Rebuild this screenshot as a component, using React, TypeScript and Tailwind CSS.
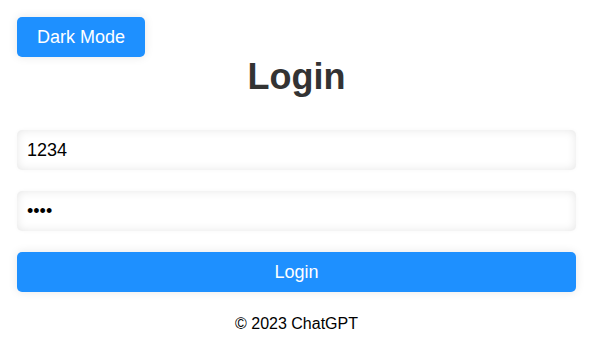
import { useState } from "react";

export default function App() {
    const [dark, setDark] = useState(false);
    const [user, setUser] = useState("1234");
    const [pass, setPass] = useState("1234");

    return (
        <div
            className={`min-h-screen pl-[17px] pr-[16px] pt-[17px] ${dark ? "bg-[#222] text-white" : "bg-white text-black"}`}
            style={{ fontFamily: '"Liberation Sans", Arial, sans-serif' }}
        >
            <div className="flex">
                <button
                    onClick={() => setDark(!dark)}
                    className="h-10 px-5 rounded-[5px] bg-[#1e90ff] text-white text-[18px] shadow-[0_0_10px_rgba(0,0,0,0.1)]"
                >
                    Dark Mode
                </button>
            </div>

            <h1 className="text-center text-[36px] leading-10 font-bold text-[#333]">Login</h1>

            <form className="mt-[33px] flex flex-col gap-[21px]" onSubmit={(e) => e.preventDefault()}>
                <input
                    value={user}
                    onChange={(e) => setUser(e.target.value)}
                    className="h-10 px-[10px] rounded-[5px] bg-white text-[18px] text-black outline-none shadow-[inset_0_0_10px_rgba(0,0,0,0.1),0_0_4px_rgba(0,0,0,0.03)]"
                />
                <input
                    type="password"
                    value={pass}
                    onChange={(e) => setPass(e.target.value)}
                    className="h-10 px-[10px] rounded-[5px] bg-white text-[18px] text-black outline-none shadow-[inset_0_0_10px_rgba(0,0,0,0.1),0_0_4px_rgba(0,0,0,0.03)]"
                />
                <button
                    type="submit"
                    className="h-10 rounded-[5px] bg-[#1e90ff] text-white text-[18px] shadow-[0_0_10px_rgba(0,0,0,0.1)]"
                >
                    Login
                </button>
            </form>

            <footer className="mt-5 text-center text-base leading-6">© 2023 ChatGPT</footer>
        </div>
    );
}
